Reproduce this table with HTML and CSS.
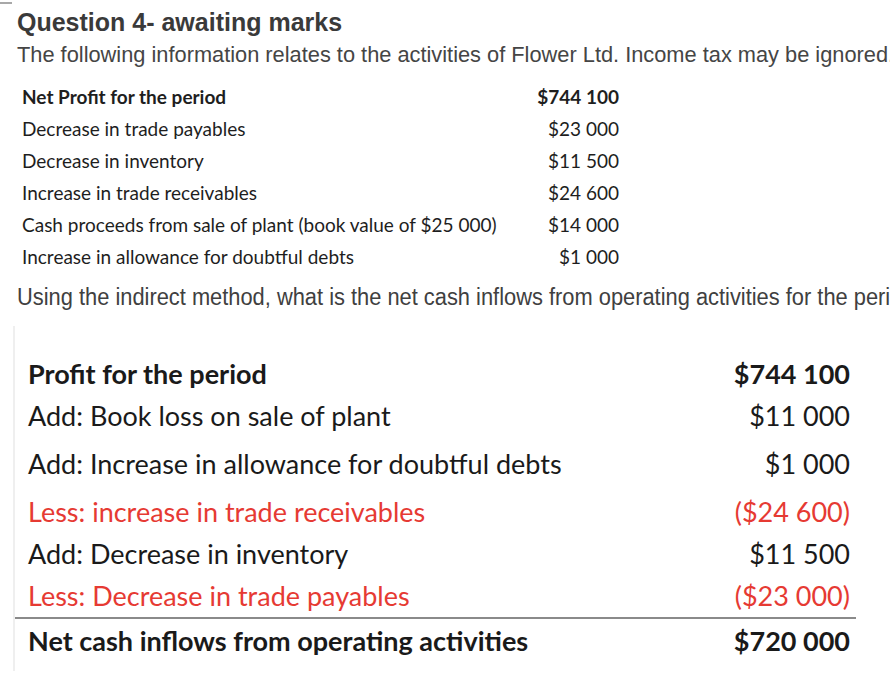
FILE: index.html
```html
<!DOCTYPE html>
<html>
<head>
<meta charset="utf-8">
<link rel="stylesheet" href="styles.css">
</head>
<body>
<div class="stub"></div>
<h1 class="title">Question 4- awaiting marks</h1>
<p class="intro">The following information relates to the activities of Flower Ltd. Income tax may be ignored.</p>
<div class="data">
  <div class="row bold"><span>Net Profit for the period</span><span>$744 100</span></div>
  <div class="row"><span>Decrease in trade payables</span><span>$23 000</span></div>
  <div class="row"><span>Decrease in inventory</span><span>$11 500</span></div>
  <div class="row"><span>Increase in trade receivables</span><span>$24 600</span></div>
  <div class="row"><span>Cash proceeds from sale of plant (book value of $25 000)</span><span>$14 000</span></div>
  <div class="row"><span>Increase in allowance for doubtful debts</span><span>$1 000</span></div>
</div>
<p class="question"><span class="narrow">Using the indirect method, what is the net cash inflows from operating activities for the period?</span></p>
<div class="answer">
  <div class="arow bold"><span>Profit for the period</span><span>$744 100</span></div>
  <div class="arow"><span>Add: Book loss on sale of plant</span><span>$11 000</span></div>
  <div class="arow tall"><span>Add: Increase in allowance for doubtful debts</span><span>$1 000</span></div>
  <div class="arow red"><span>Less: increase in trade receivables</span><span>($24 600)</span></div>
  <div class="arow"><span>Add: Decrease in inventory</span><span>$11 500</span></div>
  <div class="arow red"><span>Less: Decrease in trade payables</span><span>($23 000)</span></div>
  <div class="arow bold total"><span>Net cash inflows from operating activities</span><span>$720 000</span></div>
</div>
</body>
</html>
```

FILE: styles.css
```css
html, body {
  margin: 0;
  padding: 0;
  background: #ffffff;
  width: 890px;
  height: 680px;
  overflow: hidden;
}
body {
  font-family: "Liberation Sans", Arial, sans-serif;
  color: #333333;
}
.stub {
  width: 12px;
  height: 2px;
  margin-top: 2px;
  background: #a8a8a8;
}
.title {
  margin: 3px 0 0 17px;
  font-size: 25px;
  line-height: 30px;
  font-weight: bold;
  color: #3a3a3a;
  white-space: nowrap;
}
.intro {
  margin: 5px 0 0 17px;
  font-size: 21.8px;
  line-height: 26px;
  color: #454545;
  white-space: nowrap;
}
.data {
  margin: 13px 0 0 22px;
  width: 597px;
  font-family: Lato, "Open Sans", sans-serif;
  font-size: 19px;
  color: #1e1e1e;
}
.row {
  display: flex;
  justify-content: space-between;
  height: 32px;
  line-height: 32px;
}
.bold { font-weight: bold; }
.question {
  margin: 9px 0 0 17px;
  font-size: 23px;
  line-height: 30px;
  color: #404040;
  white-space: nowrap;
  overflow: hidden;
}
.narrow {
  display: inline-block;
  transform: scaleX(0.95);
  transform-origin: left center;
}
.answer {
  margin: 14px 0 0 13px;
  border-left: 2px solid #efefef;
  padding: 27px 0 8px 13px;
  width: 822px;
  font-family: Lato, "Open Sans", sans-serif;
  font-size: 27px;
  color: #1a1a1a;
}
.arow {
  display: flex;
  justify-content: space-between;
  height: 42px;
  line-height: 42px;
}
.arow.tall {
  height: 54px;
  line-height: 54px;
}
.red { color: #e63a33; }
.total {
  height: 44px;
  line-height: 44px;
  margin: 0 -6px 0 -13px;
  padding: 0 6px 0 13px;
  border-top: 2px solid #8a8a8a;
}
```
